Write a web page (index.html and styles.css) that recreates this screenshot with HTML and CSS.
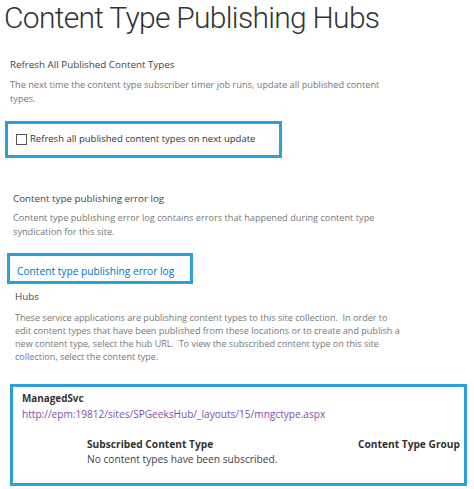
FILE: index.html
```html
<!DOCTYPE html>
<html>
<head>
<meta charset="utf-8">
<link rel="stylesheet" href="styles.css">
</head>
<body>
<div class="page">
  <h1 class="title">Content Type Publishing Hubs</h1>

  <section class="sec sec-refresh">
    <div class="sec-head">Refresh All Published Content Types</div>
    <p class="desc">The next time the content type subscriber timer job runs, update all published content types.</p>
    <div class="hl-box check-box">
      <label class="check"><span class="box"></span>Refresh all published content types on next update</label>
    </div>
  </section>

  <section class="sec sec-log">
    <div class="sec-head">Content type publishing error log</div>
    <p class="desc">Content type publishing error log contains errors that happened during content type syndication for this site.</p>
    <div class="hl-box link-box">
      <a class="link" href="#">Content type publishing error log</a>
    </div>
  </section>

  <section class="sec sec-hubs">
    <div class="sec-head">Hubs</div>
    <p class="desc">These service applications are publishing content types to this site collection.&nbsp; In order to<br>edit content types that have been published from these locations or to create and publish a new content type, select the hub URL.&nbsp; To view the subscribed content type on this site collection, select the content type.</p>
    <div class="hl-box hub-box">
      <div class="hub-name">ManagedSvc</div>
      <a class="hub-url" href="#">http://epm:19812/sites/SPGeeksHub/_layouts/15/mngctype.aspx</a>
      <div class="hub-table">
        <div class="col col-sub">
          <div class="th">Subscribed Content Type</div>
          <div class="td">No content types have been subscribed.</div>
        </div>
        <div class="col col-grp">
          <div class="th">Content Type Group</div>
        </div>
      </div>
    </div>
  </section>
</div>
</body>
</html>
```

FILE: styles.css
```css
html, body {
  margin: 0;
  padding: 0;
  background: #ffffff;
}
body {
  font-family: "Open Sans", "Noto Sans", sans-serif;
  color: #444444;
  width: 474px;
  height: 489px;
  overflow: hidden;
}
.page {
  padding: 0 0 0 4px;
}
.title {
  margin: 0;
  font-family: Roboto, "Open Sans", sans-serif;
  font-weight: 300;
  font-size: 30px;
  line-height: 36px;
  height: 36px;
  letter-spacing: -0.7px;
  color: #333333;
  white-space: nowrap;
}
.sec-head {
  font-size: 9.8px;
  line-height: 14px;
  color: #444444;
}
.desc {
  margin: 0;
  font-size: 9.2px;
  line-height: 14px;
  color: #777777;
  max-width: 380px;
}
.hl-box {
  border: 3px solid #2a9fdc;
  box-sizing: border-box;
}
.sec-refresh {
  padding-top: 22px;
  padding-left: 6px;
}
.sec-refresh .desc {
  margin-top: 6px;
}
.check-box {
  margin-top: 15px;
  margin-left: -5px;
  width: 277px;
  height: 37px;
  padding: 8px 0 0 8px;
}
.check {
  display: flex;
  align-items: center;
  gap: 3px;
  font-size: 9.5px;
  line-height: 14px;
  color: #333333;
  white-space: nowrap;
}
.box {
  width: 9px;
  height: 9px;
  border: 1px solid #555555;
  background: #ffffff;
}
.sec-log {
  padding-top: 34px;
  padding-left: 9px;
}
.sec-log .desc {
  margin-top: 5px;
}
.link-box {
  margin-top: 14px;
  margin-left: -6px;
  width: 186px;
  height: 31px;
  padding: 2px 0 0 7px;
}
.link {
  font-size: 10.2px;
  line-height: 16px;
  color: #0072c6;
  text-decoration: none;
}
.sec-hubs {
  padding-top: 6px;
  padding-left: 11px;
}
.sec-hubs .desc {
  margin-top: 7px;
  font-size: 9.05px;
  line-height: 13px;
  max-width: 400px;
}
.hub-box {
  margin-top: 21px;
  margin-left: -5px;
  width: 457px;
  height: 102px;
  padding: 3px 4px 0 9px;
}
.hub-name {
  font-size: 9.9px;
  line-height: 16px;
  font-weight: 700;
  color: #333333;
}
.hub-url {
  display: block;
  font-size: 10.1px;
  line-height: 16px;
  color: #7d4fad;
  text-decoration: none;
}
.hub-table {
  display: flex;
  justify-content: space-between;
  margin-top: 14px;
  padding-left: 65px;
}
.th {
  font-size: 10.2px;
  line-height: 16px;
  font-weight: 700;
  color: #333333;
}
.td {
  font-size: 10.2px;
  line-height: 15px;
  color: #444444;
}
```
